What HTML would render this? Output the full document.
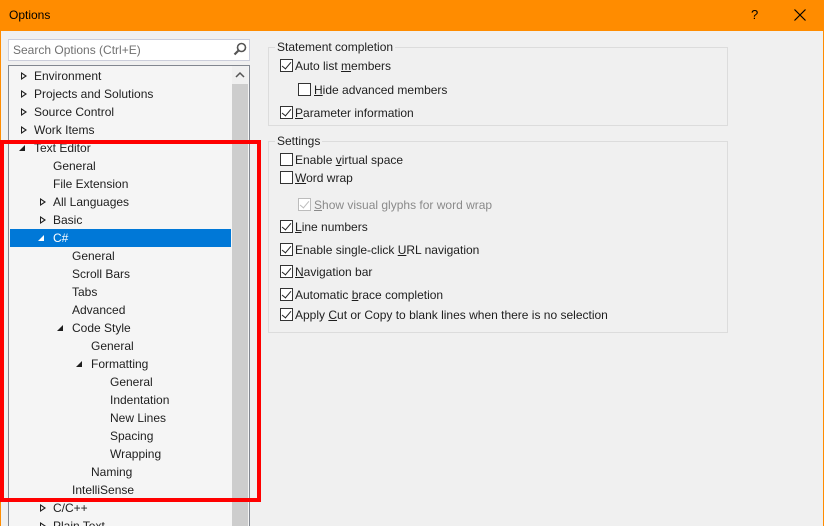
<!DOCTYPE html>
<html style="overflow:hidden;width:824px;height:526px"><head><meta charset="utf-8"><style>
*{margin:0;padding:0;box-sizing:border-box}
body{width:824px;height:526px;overflow:hidden;background:#f0f0f0;font-family:"Liberation Sans",sans-serif;font-size:12px;color:#1e1e1e;position:relative}
.a{position:absolute;white-space:nowrap}
#title{left:0;top:0;width:824px;height:31px;background:#ff8c00}
#frame{left:0;top:31px;width:824px;height:495px;border-left:1px solid #ff8c00;border-right:1px solid #ff8c00}
.row{position:absolute;height:18px;line-height:18px;white-space:nowrap}
.tri{position:absolute;top:5px;width:0;height:0}
.closed{border-left:6px solid #1e1e1e;border-top:4px solid transparent;border-bottom:4px solid transparent}
.closed::after{content:"";position:absolute;left:-5px;top:-2px;border-left:3px solid #f5f5f5;border-top:2px solid transparent;border-bottom:2px solid transparent}
.open{top:6px;border-right:6px solid #1e1e1e;border-top:6px solid transparent}
.cb{position:absolute;width:13px;height:13px;border:1px solid #333;background:#fff}
.cb.c::after{content:"";position:absolute;left:3px;top:0px;width:4px;height:8px;border-right:1.5px solid #222;border-bottom:1.5px solid #222;transform:rotate(40deg)}
.cb.d{border-color:#bcbcbc}
.cb.d::after{border-color:#bcbcbc}
.lbl{position:absolute;line-height:14px;white-space:nowrap}
.grp{position:absolute;border:1px solid #dcdcdc}
.gl{position:absolute;background:#f0f0f0;padding:0 2px;line-height:14px}
u{text-decoration:underline}
</style></head><body>
<div class="a" id="title"></div>
<div class="a" style="left:9px;top:8px;font-size:12px;color:#000">Options</div>
<div class="a" style="left:751px;top:7px;font-size:13px;color:#000">?</div>
<svg class="a" style="left:794px;top:9px" width="12" height="12"><path d="M0.5 0.5L11.5 11.5M11.5 0.5L0.5 11.5" stroke="#000" stroke-width="1.2"/></svg>
<div class="a" id="frame"></div>

<div class="a" style="left:8px;top:39px;width:242px;height:22px;background:#fff;border:1px solid #cccedb"></div>
<div class="a" style="left:13px;top:43px;color:#717171">Search Options (Ctrl+E)</div>
<svg class="a" style="left:233px;top:42px" width="14" height="14"><circle cx="8.5" cy="5.5" r="4" fill="none" stroke="#555" stroke-width="1.6"/><path d="M5.5 8.5L1.5 12.5" stroke="#555" stroke-width="2.2"/></svg>

<div class="a" style="left:8px;top:65px;width:242px;height:461px;background:#f5f5f5;border:1px solid #828790;border-bottom:none"></div>
<div class="a" style="left:232px;top:66px;width:16px;height:460px;background:#cdcdcd"></div>
<div class="a" style="left:232px;top:66px;width:16px;height:18px;background:#f0f0f0"></div>
<svg class="a" style="left:235px;top:71px" width="10" height="8"><path d="M1 6L5 2L9 6" fill="none" stroke="#555" stroke-width="1.5"/></svg>
<div class="a" style="left:10px;top:229px;width:221px;height:18px;background:#0078d7"></div>

<div class="row" style="top:67px;left:34px"><span class="tri closed" style="left:-13px"></span>Environment</div>
<div class="row" style="top:85px;left:34px"><span class="tri closed" style="left:-13px"></span>Projects and Solutions</div>
<div class="row" style="top:103px;left:34px"><span class="tri closed" style="left:-13px"></span>Source Control</div>
<div class="row" style="top:121px;left:34px"><span class="tri closed" style="left:-13px"></span>Work Items</div>
<div class="row" style="top:139px;left:34px"><span class="tri open" style="left:-15px"></span>Text Editor</div>
<div class="row" style="top:157px;left:53px">General</div>
<div class="row" style="top:175px;left:53px">File Extension</div>
<div class="row" style="top:193px;left:53px"><span class="tri closed" style="left:-13px"></span>All Languages</div>
<div class="row" style="top:211px;left:53px"><span class="tri closed" style="left:-13px"></span>Basic</div>
<div class="row" style="top:229px;left:53px;color:#fff"><span class="tri open" style="left:-15px;border-right-color:#fff"></span>C#</div>
<div class="row" style="top:247px;left:72px">General</div>
<div class="row" style="top:265px;left:72px">Scroll Bars</div>
<div class="row" style="top:283px;left:72px">Tabs</div>
<div class="row" style="top:301px;left:72px">Advanced</div>
<div class="row" style="top:319px;left:72px"><span class="tri open" style="left:-15px"></span>Code Style</div>
<div class="row" style="top:337px;left:91px">General</div>
<div class="row" style="top:355px;left:91px"><span class="tri open" style="left:-15px"></span>Formatting</div>
<div class="row" style="top:373px;left:110px">General</div>
<div class="row" style="top:391px;left:110px">Indentation</div>
<div class="row" style="top:409px;left:110px">New Lines</div>
<div class="row" style="top:427px;left:110px">Spacing</div>
<div class="row" style="top:445px;left:110px">Wrapping</div>
<div class="row" style="top:463px;left:91px">Naming</div>
<div class="row" style="top:481px;left:72px">IntelliSense</div>
<div class="row" style="top:499px;left:53px"><span class="tri closed" style="left:-13px"></span>C/C++</div>
<div class="row" style="top:517px;left:53px"><span class="tri closed" style="left:-13px"></span>Plain Text</div>

<div class="a" style="left:0;top:140px;width:261px;height:362px;border:4px solid #ff0000"></div>

<div class="grp" style="left:268px;top:47px;width:460px;height:79px"></div>
<div class="gl" style="left:275px;top:40px">Statement completion</div>
<div class="grp" style="left:268px;top:141px;width:460px;height:192px"></div>
<div class="gl" style="left:275px;top:134px">Settings</div>

<div class="cb c" style="left:280px;top:59px"></div><div class="lbl" style="left:295px;top:59px">Auto list <u>m</u>embers</div>
<div class="cb" style="left:298px;top:83px"></div><div class="lbl" style="left:314px;top:83px"><u>H</u>ide advanced members</div>
<div class="cb c" style="left:280px;top:106px"></div><div class="lbl" style="left:295px;top:106px"><u>P</u>arameter information</div>
<div class="cb" style="left:280px;top:153px"></div><div class="lbl" style="left:295px;top:153px">Enable <u>v</u>irtual space</div>
<div class="cb" style="left:280px;top:171px"></div><div class="lbl" style="left:295px;top:171px"><u>W</u>ord wrap</div>
<div class="cb c d" style="left:298px;top:198px"></div><div class="lbl" style="left:314px;top:198px;color:#8a8a8a"><u>S</u>how visual glyphs for word wrap</div>
<div class="cb c" style="left:280px;top:220px"></div><div class="lbl" style="left:295px;top:220px"><u>L</u>ine numbers</div>
<div class="cb c" style="left:280px;top:243px"></div><div class="lbl" style="left:295px;top:243px">Enable single-click <u>U</u>RL navigation</div>
<div class="cb c" style="left:280px;top:265px"></div><div class="lbl" style="left:295px;top:265px"><u>N</u>avigation bar</div>
<div class="cb c" style="left:280px;top:288px"></div><div class="lbl" style="left:295px;top:288px">Automatic <u>b</u>race completion</div>
<div class="cb c" style="left:280px;top:308px"></div><div class="lbl" style="left:295px;top:308px">Apply <u>C</u>ut or Copy to blank lines when there is no selection</div>
</body></html>
